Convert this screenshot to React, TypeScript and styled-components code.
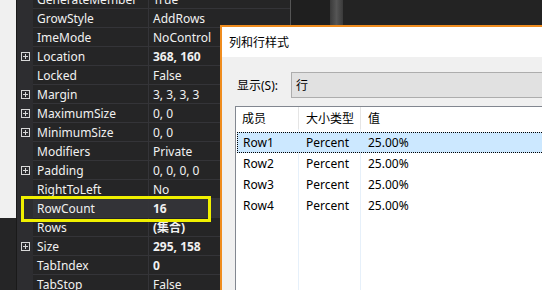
import React from "react";
import styled, { createGlobalStyle, css } from "styled-components";

interface PropRow {
  name: string;
  value: string;
  expandable?: boolean;
  bold?: boolean;
  selected?: boolean;
}

const props: PropRow[] = [
  { name: "GenerateMember", value: "True" },
  { name: "GrowStyle", value: "AddRows" },
  { name: "ImeMode", value: "NoControl" },
  { name: "Location", value: "368, 160", expandable: true, bold: true },
  { name: "Locked", value: "False" },
  { name: "Margin", value: "3, 3, 3, 3", expandable: true },
  { name: "MaximumSize", value: "0, 0", expandable: true },
  { name: "MinimumSize", value: "0, 0", expandable: true },
  { name: "Modifiers", value: "Private" },
  { name: "Padding", value: "0, 0, 0, 0", expandable: true },
  { name: "RightToLeft", value: "No" },
  { name: "RowCount", value: "16", bold: true, selected: true },
  { name: "Rows", value: "(集合)", bold: true },
  { name: "Size", value: "295, 158", expandable: true, bold: true },
  { name: "TabIndex", value: "0", bold: true },
  { name: "TabStop", value: "False" },
];

const rowStyles = ["Row1", "Row2", "Row3", "Row4"];

const GlobalStyle = createGlobalStyle`
  html, body {
    margin: 0;
    padding: 0;
    background: #1e1e1e;
    overflow: hidden;
  }
  body {
    font-family: "Noto Sans", "Noto Sans CJK SC", sans-serif;
    font-size: 12px;
  }
`;

const Page = styled.div`
  position: relative;
  width: 542px;
  height: 290px;
  overflow: hidden;
  display: flex;
  background: #222222;
`;

const LeftStrip = styled.div`
  width: 17px;
  flex-shrink: 0;
  display: flex;
  flex-direction: column;
  border-right: 1px solid #1a1a1a;
  box-sizing: border-box;
`;

const StripLight = styled.div`
  height: 218px;
  background: #f0f0f0;
`;

const StripDark = styled.div`
  flex: 1;
  background: #252526;
`;

const Grid = styled.div`
  width: 273px;
  flex-shrink: 0;
  background: #252526;
  border-right: 1px solid #555555;
  overflow: hidden;
`;

const GridBody = styled.div`
  margin-top: -10px;
`;

const GridRow = styled.div<{ $selected?: boolean }>`
  display: grid;
  grid-template-columns: 16px 116px 1fr;
  height: 19px;
  color: #f1f1f1;
  ${({ $selected }) =>
    $selected &&
    css`
      & > span:not(:first-child) {
        background: #333337;
      }
    `}
`;

const Margin = styled.span`
  background: #2d2d30;
  display: flex;
  align-items: center;
  justify-content: center;
`;

const Cell = styled.span<{ $bold?: boolean }>`
  display: flex;
  align-items: center;
  padding-left: 4px;
  border-bottom: 1px solid #343438;
  font-weight: ${({ $bold }) => ($bold ? 700 : 400)};
  white-space: nowrap;
  overflow: hidden;
`;

const NameCell = styled(Cell)`
  border-right: 1px solid #343438;
`;

const ExpandIcon = () => (
  <svg width="9" height="9" viewBox="0 0 9 9">
    <rect x="0.5" y="0.5" width="8" height="8" fill="none" stroke="#d8d8d8" />
    <path d="M2 4.5h5M4.5 2v5" stroke="#d8d8d8" />
  </svg>
);

const Gutter = styled.div`
  width: 39px;
  flex-shrink: 0;
  background: #1f1f1f;
`;

const ScrollBar = styled.div`
  width: 13px;
  flex-shrink: 0;
  background: linear-gradient(90deg, #3a3a3a, #555555 50%, #3a3a3a);
`;

const Rest = styled.div`
  flex: 1;
  background: #232323;
`;

const Highlight = styled.div`
  position: absolute;
  left: 21px;
  top: 196px;
  width: 190px;
  height: 26px;
  box-sizing: border-box;
  border: 3px solid #f0f000;
`;

const Dialog = styled.div`
  position: absolute;
  left: 220px;
  top: 25px;
  width: 340px;
  height: 290px;
  border: 2px solid #ef8c1e;
  background: #f0f0f0;
  color: #000000;
  display: flex;
  flex-direction: column;
`;

const TitleBar = styled.div`
  height: 30px;
  background: #ffffff;
  display: flex;
  align-items: center;
  padding-left: 7px;
  font-size: 12px;
`;

const DialogBody = styled.div`
  padding: 15px 0 0 13px;
  display: flex;
  flex-direction: column;
  gap: 8px;
`;

const ShowRow = styled.div`
  display: flex;
  align-items: center;
`;

const Label = styled.span`
  width: 54px;
  margin-left: 2px;
`;

const Combo = styled.div`
  flex: 1;
  height: 26px;
  box-sizing: border-box;
  border: 1px solid #adadad;
  border-right: none;
  background: #e1e1e1;
  display: flex;
  align-items: center;
  padding-left: 4px;
`;

const ListView = styled.div`
  height: 200px;
  background: #ffffff;
  border: 1px solid #828790;
  border-right: none;
  position: relative;
`;

const ListHeader = styled.div`
  display: grid;
  grid-template-columns: 63px 62px 1fr;
  height: 22px;
  margin-bottom: 3px;
`;

const HeaderCell = styled.span`
  display: flex;
  align-items: center;
  padding-left: 7px;
  border-right: 1px solid #e5e5e5;

  &:first-child {
    padding-left: 6px;
  }
`;

const ColumnLines = styled.div`
  position: absolute;
  top: 22px;
  bottom: 0;
  left: 0;
  right: 0;
  display: grid;
  grid-template-columns: 63px 62px 1fr;
  pointer-events: none;
`;

const ColumnLine = styled.span`
  border-right: 1px solid #e6f0fa;
`;

const ListRow = styled.div<{ $selected?: boolean }>`
  position: relative;
  display: grid;
  grid-template-columns: 61px 62px 1fr;
  height: 21px;
  margin-left: 1px;
  box-sizing: border-box;
  border: 1px dotted transparent;
  ${({ $selected }) =>
    $selected &&
    css`
      background: #cce8ff;
      border-color: #000000;
    `}
`;

const ListCell = styled.span`
  display: flex;
  align-items: center;
  padding-left: 7px;

  &:first-child {
    padding-left: 5px;
  }
`;

const App = () => (
  <>
    <GlobalStyle />
    <Page>
      <LeftStrip>
        <StripLight />
        <StripDark />
      </LeftStrip>
      <Grid>
        <GridBody>
          {props.map((p) => (
            <GridRow key={p.name} $selected={p.selected}>
              <Margin>{p.expandable && <ExpandIcon />}</Margin>
              <NameCell>{p.name}</NameCell>
              <Cell $bold={p.bold}>{p.value}</Cell>
            </GridRow>
          ))}
        </GridBody>
      </Grid>
      <Gutter />
      <ScrollBar />
      <Rest />
      <Highlight />
      <Dialog>
        <TitleBar>列和行样式</TitleBar>
        <DialogBody>
          <ShowRow>
            <Label>显示(S):</Label>
            <Combo>行</Combo>
          </ShowRow>
          <ListView>
            <ColumnLines>
              <ColumnLine />
              <ColumnLine />
              <span />
            </ColumnLines>
            <ListHeader>
              <HeaderCell>成员</HeaderCell>
              <HeaderCell>大小类型</HeaderCell>
              <HeaderCell>值</HeaderCell>
            </ListHeader>
            {rowStyles.map((r, i) => (
              <ListRow key={r} $selected={i === 0}>
                <ListCell>{r}</ListCell>
                <ListCell>Percent</ListCell>
                <ListCell>25.00%</ListCell>
              </ListRow>
            ))}
          </ListView>
        </DialogBody>
      </Dialog>
    </Page>
  </>
);

export default App;
